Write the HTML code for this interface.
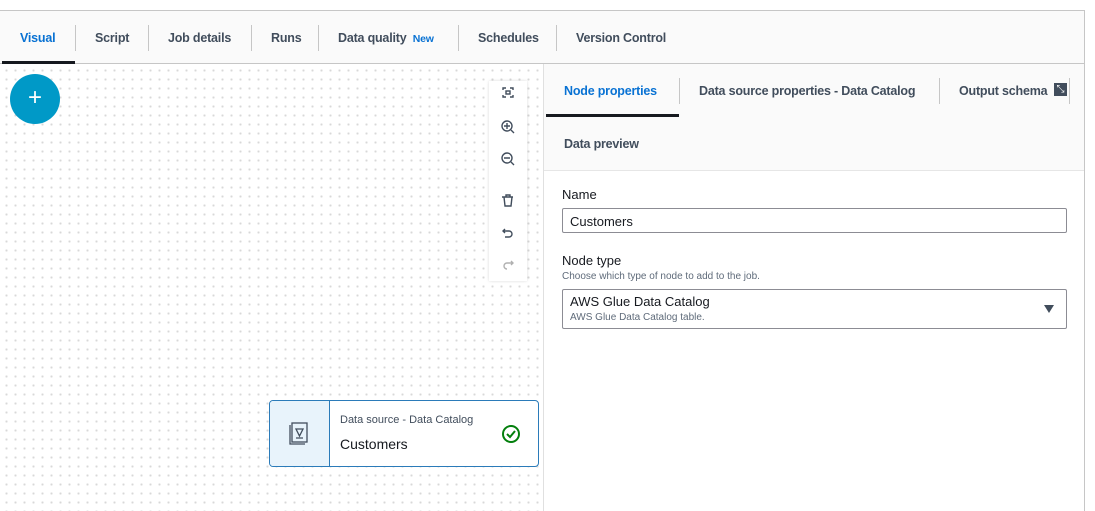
<!DOCTYPE html>
<html><head><style>
*{box-sizing:border-box;margin:0;padding:0}
body{width:1095px;height:511px;overflow:hidden;background:#fff;font-family:"Liberation Sans",sans-serif;position:relative;color:#16191f}
.abs{position:absolute}
.tabbar{left:0;top:10px;width:1085px;height:54px;background:#fafafa;border-top:1px solid #c6c6c6;border-bottom:1px solid #c6c6c6;border-right:1px solid #c6c6c6}
.tab{position:absolute;top:20px;font-size:12.5px;font-weight:bold;color:#414d5c;letter-spacing:-0.2px}
.sep{position:absolute;top:14px;width:1px;height:26px;background:#c6c6c6}
.canvas{left:0;top:64px;width:544px;height:447px;background-color:#fff;background-image:radial-gradient(circle,#d8d8d8 1px,transparent 1.2px);background-size:9px 9px;background-position:2px 2px;border-right:1px solid #e0e0e0}
.panel{left:544px;top:64px;width:541px;height:447px;background:#fff;border-right:1px solid #c6c6c6}
.phead{left:0;top:0;width:540px;height:107px;background:#fafafa;border-bottom:1px solid #e6e6e6}
.lbl{font-size:13px;color:#16191f}
.inp{border:1px solid #8c8c94;border-radius:2px;background:#fff}
</style></head><body>
<div class="abs tabbar">
 <div class="tab" style="left:20px;color:#0972d3">Visual</div>
 <div class="abs" style="left:2px;top:50px;width:73px;height:3px;background:#16191f"></div>
 <div class="sep" style="left:75px"></div>
 <div class="tab" style="left:95px">Script</div>
 <div class="sep" style="left:148px"></div>
 <div class="tab" style="left:168px">Job details</div>
 <div class="sep" style="left:251px"></div>
 <div class="tab" style="left:271px">Runs</div>
 <div class="sep" style="left:318px"></div>
 <div class="tab" style="left:338px">Data quality <span style="font-size:10.5px;color:#0972d3;margin-left:3px">New</span></div>
 <div class="sep" style="left:458px"></div>
 <div class="tab" style="left:478px">Schedules</div>
 <div class="sep" style="left:556px"></div>
 <div class="tab" style="left:576px">Version Control</div>
</div>
<div class="abs canvas">
 <div class="abs" style="left:10px;top:10px;width:50px;height:50px;border-radius:50%;background:#0099c7;color:#fff;font-size:24px;text-align:center;line-height:48px">+</div>
 <div class="abs" style="left:489px;top:17px;width:38px;height:200px;background:#fff;box-shadow:0 0 3px rgba(0,0,0,.15)">
  <svg width="38" height="200" fill="none" stroke="#414d5c" stroke-width="1.4">
   <path d="M14 9v-2h3M21 7h3v2M24 14v2h-3M17 16h-3v-2"/><rect x="17" y="10" width="4" height="3"/>
   <circle cx="18" cy="45" r="5"/><path d="M22 49l3 3M18 42v6M15 45h6"/>
   <circle cx="18" cy="77" r="5"/><path d="M22 81l3 3M15 77h6"/>
   <path d="M13 116h11M15 116l1 9h6l1-9M17 116v-2h4v2"/>
   <path d="M16 148l-2 2 2 2M14 150h6a3 3 0 0 1 0 6h-4"/>
   <path stroke="#b0b0b0" d="M22 180l2 2-2 2M24 182h-6a3 3 0 0 0 0 6"/>
  </svg>
 </div>
 <div class="abs" style="left:269px;top:336px;width:270px;height:67px;border:1px solid #2b7bb9;border-radius:4px;background:#fff;overflow:hidden">
  <div class="abs" style="left:0;top:0;width:60px;height:65px;background:#e8f3fb;border-right:1px solid #2b7bb9">
   <svg class="abs" style="left:18px;top:20px" width="24" height="24" fill="none" stroke="#414d5c" stroke-width="1.3"><rect x="4" y="2" width="15" height="19"/><path d="M2 4v19h15"/><path d="M8 8h7l-3.5 7z M8 17h7"/></svg>
  </div>
  <div class="abs" style="left:70px;top:13px;font-size:11px;color:#414d5c">Data source - Data Catalog</div>
  <div class="abs" style="left:70px;top:35px;font-size:14px">Customers</div>
  <svg class="abs" style="left:231px;top:23px" width="20" height="20" fill="none" stroke="#037f0c" stroke-width="2"><circle cx="10" cy="10" r="8"/><path d="M6 10l3 3 5-6"/></svg>
 </div>
</div>
<div class="abs panel">
 <div class="abs phead">
  <div class="tab" style="left:20px;top:20px;color:#0972d3">Node properties</div>
  <div class="abs" style="left:2px;top:50px;width:133px;height:3px;background:#16191f"></div>
  <div class="sep" style="left:135px"></div>
  <div class="tab" style="left:155px;top:20px">Data source properties - Data Catalog</div>
  <div class="sep" style="left:395px"></div>
  <div class="tab" style="left:415px;top:20px">Output schema</div>
  <div class="abs" style="left:510px;top:19px;width:13px;height:13px;background:#414d5c;color:#fff;font-size:10px;line-height:13px;text-align:center">⤡</div>
  <div class="sep" style="left:525px"></div>
  <div class="tab" style="left:20px;top:73px">Data preview</div>
 </div>
 <div class="abs lbl" style="left:18px;top:123px">Name</div>
 <div class="abs inp" style="left:18px;top:144px;width:505px;height:25px;font-size:13px;padding:5px 7px">Customers</div>
 <div class="abs lbl" style="left:18px;top:189px">Node type</div>
 <div class="abs" style="left:18px;top:207px;font-size:10px;color:#5f6b7a">Choose which type of node to add to the job.</div>
 <div class="abs inp" style="left:18px;top:225px;width:505px;height:40px">
  <div class="abs" style="left:7px;top:4px;font-size:13px">AWS Glue Data Catalog</div>
  <div class="abs" style="left:7px;top:22px;font-size:10px;color:#5f6b7a">AWS Glue Data Catalog table.</div>
  <div class="abs" style="left:481px;top:15px;width:0;height:0;border-left:5px solid transparent;border-right:5px solid transparent;border-top:8px solid #414d5c"></div>
 </div>
</div>
</body></html>
